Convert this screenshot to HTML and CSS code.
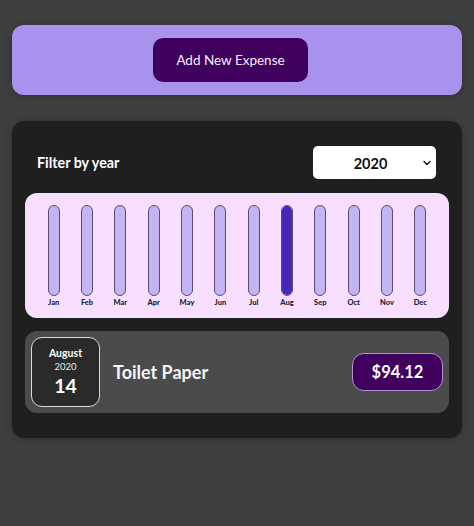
FILE: index.html
```html
<!DOCTYPE html>
<html lang="en">
<head>
<meta charset="utf-8">
<title>Expenses</title>
<link rel="stylesheet" href="styles.css">
</head>
<body>
<div class="app">
  <div class="new-expense">
    <button class="add-btn" type="button">Add New Expense</button>
  </div>
  <div class="expenses">
    <div class="filter">
      <label class="filter-label">Filter by year</label>
      <div class="select-wrap">
        <select class="year-select">
          <option>2022</option>
          <option>2021</option>
          <option selected>2020</option>
          <option>2019</option>
        </select>
        <svg class="chev" width="8" height="6" viewBox="0 0 8 6"><path d="M1 1.5 L4 4.5 L7 1.5" fill="none" stroke="#111" stroke-width="1.4" stroke-linecap="round" stroke-linejoin="round"/></svg>
      </div>
    </div>
    <div class="chart">
      <div class="bar-col"><div class="bar"></div><span class="bar-label">Jan</span></div>
      <div class="bar-col"><div class="bar"></div><span class="bar-label">Feb</span></div>
      <div class="bar-col"><div class="bar"></div><span class="bar-label">Mar</span></div>
      <div class="bar-col"><div class="bar"></div><span class="bar-label">Apr</span></div>
      <div class="bar-col"><div class="bar"></div><span class="bar-label">May</span></div>
      <div class="bar-col"><div class="bar"></div><span class="bar-label">Jun</span></div>
      <div class="bar-col"><div class="bar"></div><span class="bar-label">Jul</span></div>
      <div class="bar-col"><div class="bar"><div class="bar-fill" style="height:100%"></div></div><span class="bar-label">Aug</span></div>
      <div class="bar-col"><div class="bar"></div><span class="bar-label">Sep</span></div>
      <div class="bar-col"><div class="bar"></div><span class="bar-label">Oct</span></div>
      <div class="bar-col"><div class="bar"></div><span class="bar-label">Nov</span></div>
      <div class="bar-col"><div class="bar"></div><span class="bar-label">Dec</span></div>
    </div>
    <div class="item">
      <div class="date">
        <div class="date-month">August</div>
        <div class="date-year">2020</div>
        <div class="date-day">14</div>
      </div>
      <h2 class="item-title">Toilet Paper</h2>
      <div class="price">$94.12</div>
    </div>
  </div>
</div>
</body>
</html>
```
FILE: styles.css
```css
* { box-sizing: border-box; }
html, body {
  margin: 0;
  padding: 0;
  background: #3f3f3f;
  font-family: Lato, "Noto Sans", sans-serif;
}
.app {
  padding: 25px 12px;
  display: flex;
  flex-direction: column;
  gap: 26px;
}
.new-expense {
  background: #a892ee;
  border-radius: 12px;
  height: 70px;
  display: flex;
  align-items: center;
  justify-content: center;
  box-shadow: 0 1px 8px rgba(0,0,0,0.25);
}
.add-btn {
  width: 155px;
  height: 44px;
  border: none;
  border-radius: 10px;
  background: #40005d;
  color: #f3eefa;
  font-family: inherit;
  font-size: 13.5px;
  padding: 0;
  margin-right: 13px;
}
.expenses {
  background: #1f1f1f;
  border-radius: 12px;
  padding: 25px 13px 25px 13px;
  display: flex;
  flex-direction: column;
  box-shadow: 0 1px 8px rgba(0,0,0,0.25);
}
.filter {
  display: flex;
  align-items: center;
  justify-content: space-between;
  padding: 0 13px 0 12px;
  height: 33px;
}
.filter-label {
  color: #fff;
  font-weight: bold;
  font-size: 14.3px;
}
.select-wrap {
  position: relative;
  width: 123px;
  height: 33px;
}
.year-select {
  appearance: none;
  -webkit-appearance: none;
  width: 100%;
  height: 100%;
  border: none;
  border-radius: 5px;
  background: #fff;
  font-family: inherit;
  font-weight: bold;
  font-size: 14.5px;
  color: #111;
  text-align: center;
  text-align-last: center;
  padding: 2px 8px 0 0;
}
.chev {
  position: absolute;
  right: 5px;
  top: 14px;
  pointer-events: none;
}
.chart {
  margin-top: 14px;
  background: #f8dfff;
  border-radius: 12px;
  padding: 12px 12px 11px;
  height: 125px;
  display: grid;
  grid-template-columns: repeat(12, 1fr);
}
.bar-col {
  display: flex;
  flex-direction: column;
  align-items: center;
}
.bar {
  width: 12px;
  height: 91px;
  border: 1px solid #5d4e70;
  border-radius: 12px;
  background: #c3b4f3;
  display: flex;
  flex-direction: column;
  justify-content: flex-end;
  overflow: hidden;
}
.bar-fill {
  width: 100%;
  background: #4826b9;
}
.bar-label {
  margin-top: 2px;
  font-size: 7.5px;
  font-weight: 900;
  color: #222230;
}
.item {
  margin-top: 13px;
  background: #4b4b4b;
  border-radius: 12px;
  padding: 6px;
  height: 82px;
  display: flex;
  align-items: center;
  gap: 13px;
}
.date {
  width: 69px;
  height: 70px;
  border: 1px solid #d8d8d8;
  border-radius: 11px;
  background: #2a2a2a;
  color: #fff;
  display: flex;
  flex-direction: column;
  align-items: center;
  justify-content: center;
  flex-shrink: 0;
}
.date-month {
  font-weight: bold;
  font-size: 10.5px;
  line-height: 13px;
}
.date-year {
  font-size: 9.5px;
  line-height: 13px;
  color: #e8e8e8;
}
.date-day {
  font-weight: bold;
  font-size: 19.5px;
  line-height: 22px;
  margin-top: 2px;
}
.item-title {
  flex: 1;
  margin: 0;
  color: #f5f5f5;
  font-size: 18px;
  font-weight: bold;
}
.price {
  width: 91px;
  height: 38px;
  display: flex;
  align-items: center;
  justify-content: center;
  background: #40005d;
  border: 1px solid #b78fd4;
  border-radius: 12px;
  color: #fff;
  font-weight: bold;
  font-size: 16.5px;
}
```
